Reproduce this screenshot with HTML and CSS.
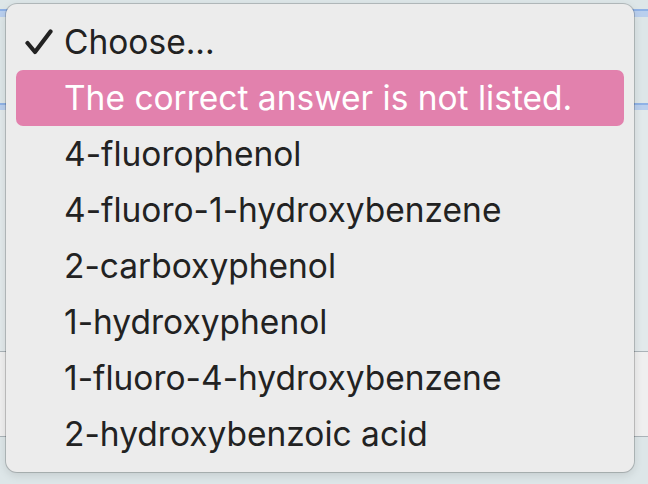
FILE: index.html
```html
<!DOCTYPE html>
<html lang="en">
<head>
  <meta charset="UTF-8">
  <meta name="viewport" content="width=device-width, initial-scale=1.0">
  <title>Choose answer</title>
  <link rel="stylesheet" href="styles.css">
</head>
<body>

  <!-- page behind the popup menu -->
  <div class="backdrop">
    <div class="band band-top"></div>
    <div class="band band-header"></div>
    <div class="gap gap-mid"></div>
    <div class="row-light"></div>
  </div>

  <ul class="menu">
    <li class="menu-item checked">
      <svg class="check" viewBox="0 0 28 26" width="28" height="26">
        <path d="M2.5 14 L10 23 L25.5 2.5" fill="none" stroke="#222" stroke-width="4.2" stroke-linecap="round" stroke-linejoin="round"/>
      </svg>
      Choose...
    </li>
    <li class="menu-item active">The correct answer is not listed.</li>
    <li class="menu-item">4-fluorophenol</li>
    <li class="menu-item">4-fluoro-1-hydroxybenzene</li>
    <li class="menu-item">2-carboxyphenol</li>
    <li class="menu-item">1-hydroxyphenol</li>
    <li class="menu-item">1-fluoro-4-hydroxybenzene</li>
    <li class="menu-item">2-hydroxybenzoic acid</li>
  </ul>

</body>
</html>
```

FILE: styles.css
```css
body {
  margin: 0;
  padding: 0;
  width: 648px;
  height: 484px;
  overflow: hidden;
  background-color: #dde6e8;
  font-family: Inter, "Noto Sans", sans-serif;
}
.backdrop {
  display: flex;
  flex-direction: column;
  height: 484px;
}
.band {
  border-top: 2px solid #8fb2e6;
  background-color: #b9cfee;
}
.band-top {
  margin-top: 9px;
  height: 6px;
  margin-bottom: 86px;
}
.band-header {
  height: 5px;
}
.gap-mid {
  height: 241px;
  background-color: #e2e9eb;
}
.row-light {
  height: 84px;
  border-top: 1px solid #aab3b8;
  border-bottom: 1px solid #aab3b8;
  background-color: #efefef;
}
.menu {
  position: absolute;
  left: 6px;
  top: 4px;
  width: 608px;
  height: 448px;
  margin: 0;
  padding: 10px;
  list-style: none;
  background-color: #ececec;
  border-radius: 11px;
  box-shadow: 0 0 0 1px rgba(0, 0, 0, 0.18), 0 3px 10px rgba(0, 0, 0, 0.12);
}
.menu-item {
  position: relative;
  height: 56px;
  line-height: 56px;
  padding-left: 48px;
  border-radius: 7px;
  font-size: 33.5px;
  color: #222;
  white-space: nowrap;
}
.menu-item.active {
  background-color: #e281ad;
  color: #fff;
}
.check {
  position: absolute;
  left: 9px;
  top: 15px;
}
```
